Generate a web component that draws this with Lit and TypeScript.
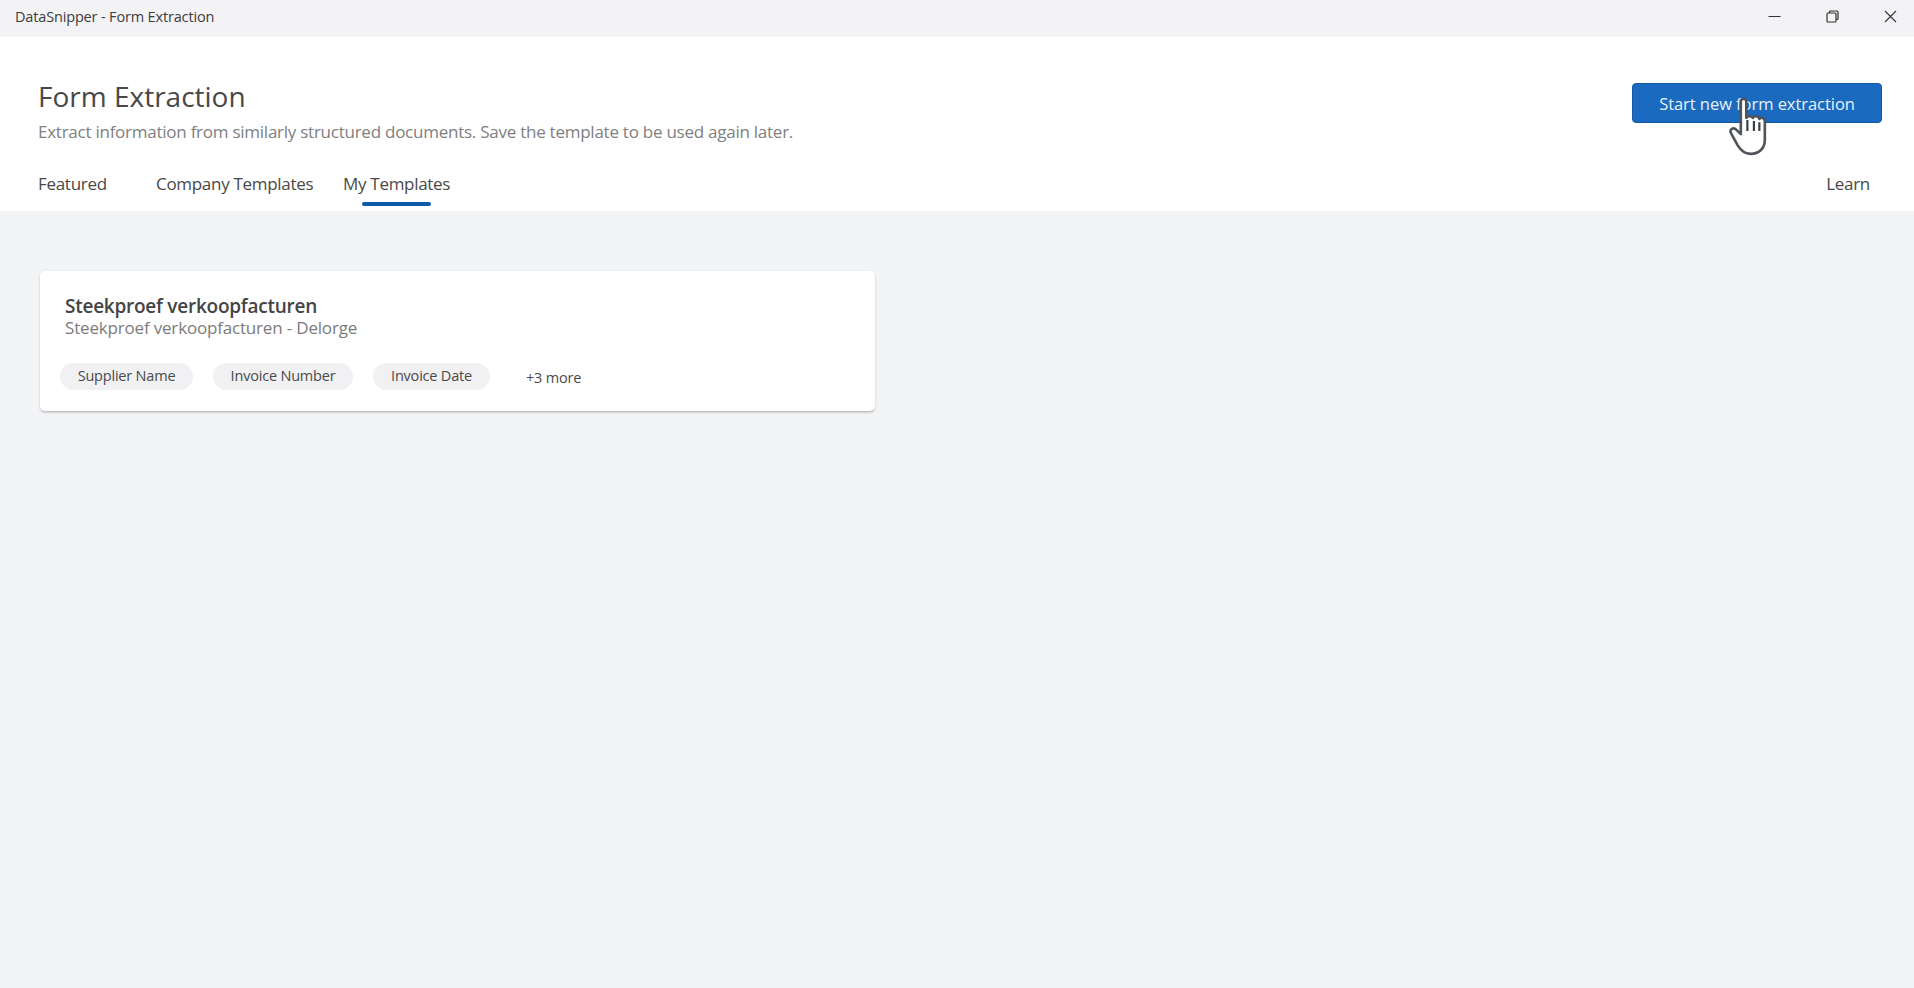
import { LitElement, html, css } from "lit";
import { customElement } from "lit/decorators.js";

@customElement("app-root")
export class AppRoot extends LitElement {
  static styles = css`
    :host { display: flex; flex-direction: column; width: 100%; height: 988px; background: #f3f4f6; font-family: "Open Sans", "Noto Sans", sans-serif; color: #444; overflow: hidden; }
    .titlebar { height: 37px; flex: none; box-sizing: border-box; padding: 0 0 4px 15px; display: flex; align-items: center; background: #f3f3f5; font-size: 14.5px; letter-spacing: -0.16px; color: #3c3c3c; position: relative; }
    .winbtns { margin-left: auto; display: flex; align-items: center; gap: 45px; padding-right: 17px; }
    .winbtns svg { display: block; width: 13px; height: 13px; }
    .header { height: 174px; flex: none; background: #fff; display: flex; flex-direction: column; padding: 0 32px 0 38px; box-sizing: border-box; position: relative; }
    .top { display: flex; justify-content: space-between; align-items: flex-start; padding-top: 41px; }
    h1 { margin: 0; font-size: 28px; font-weight: 400; line-height: 36px; color: #484848; }
    .sub { margin-top: 6px; font-size: 17px; line-height: 24px; color: #808080; letter-spacing: -0.25px; }
    .btn { width: 250px; height: 40px; margin-top: 5px; box-sizing: border-box; display: flex; align-items: center; justify-content: center; background: #1a6ac0; border: 1px solid #1458a4; border-radius: 4px; color: #e8f1fa; font-family: inherit; font-size: 16.5px; letter-spacing: -0.05px; padding: 0; }
    .tabs { display: flex; align-items: flex-start; margin-top: 28px; font-size: 17px; line-height: 24px; letter-spacing: -0.3px; color: #484848; }
    .tab { position: relative; }
    .tab.w1 { width: 118px; } .tab.w2 { width: 187px; }
    .tab.active::after { content: ""; position: absolute; left: 19px; right: 19px; top: 30px; height: 4px; border-radius: 2px; background: #0f5ba8; }
    .learn { margin-left: auto; margin-right: 12px; }
    .content { padding: 60px 0 0 40px; }
    .card { width: 835px; height: 140px; box-sizing: border-box; background: #fff; border-radius: 5px; box-shadow: 0 2px 3px -1px rgba(0,0,0,.3), 0 0 3px rgba(0,0,0,.06); padding: 23px 20px 0 25px; }
    .name { font-size: 19px; font-weight: 600; line-height: 24px; letter-spacing: -0.25px; color: #444; }
    .desc { margin-top: -1px; font-size: 17px; line-height: 22px; letter-spacing: -0.18px; color: #7c7c7c; }
    .chips { display: flex; align-items: center; margin: 24px 0 0 -5px; font-size: 14.5px; letter-spacing: -0.2px; color: #4a4a4a; }
    .chip { height: 27px; box-sizing: border-box; padding-bottom: 2px; display: flex; align-items: center; justify-content: center; border-radius: 14px; background: #f1f0f2; margin-right: 20px; }
    .more { margin-left: 16px; padding-top: 1px; }
    .hand { position: absolute; left: 1726px; top: 96px; width: 46px; height: 60px; pointer-events: none; }
  `;

  private chips = [["Supplier Name", 133], ["Invoice Number", 140], ["Invoice Date", 117]] as [string, number][];

  render() {
    return html`
      <div class="titlebar">
        <span>DataSnipper - Form Extraction</span>
        <div class="winbtns">
          <svg viewBox="0 0 13 13"><path d="M0.5 6.5h12" stroke="#333" stroke-width="1" fill="none"/></svg>
          <svg viewBox="0 0 13 13" fill="none" stroke="#333" stroke-width="1.2"><rect x="1" y="3" width="9" height="9" rx="1"/><path d="M3.5 3V2a1 1 0 0 1 1-1H11a1 1 0 0 1 1 1v6.500a1 1 0 0 1-1 1h-1"/></svg>
          <svg viewBox="0 0 13 13"><path d="M1 1l11 11M12 1L1 12" stroke="#333" stroke-width="1.100" fill="none"/></svg>
        </div>
      </div>
      <div class="header">
        <div class="top">
          <div>
            <h1>Form Extraction</h1>
            <div class="sub">Extract information from similarly structured documents. Save the template to be used again later.</div>
          </div>
          <button class="btn">Start new form extraction</button>
        </div>
        <div class="tabs">
          <div class="tab w1">Featured</div>
          <div class="tab w2">Company Templates</div>
          <div class="tab active">My Templates</div>
          <div class="tab learn">Learn</div>
        </div>
      </div>
      <div class="content">
        <div class="card">
          <div class="name">Steekproef verkoopfacturen</div>
          <div class="desc">Steekproef verkoopfacturen - Delorge</div>
          <div class="chips">
            ${this.chips.map(([t, w]) => html`<div class="chip" style="width:${w}px">${t}</div>`)}
            <div class="more">+3 more</div>
          </div>
        </div>
      </div>
      <svg class="hand" viewBox="1 1 37 55">
        <path d="M12 6c0-3 5-3 5 0v15c1-2 5-2 6 0 1-2 5-2 6 1 1-2 5-1 5 2v17c0 8-5 13-13 13-6 0-9-3-12-8L3 35c-2-3 2-6 5-3l4 4z" fill="#fff" stroke="#50545a" stroke-width="2.400" stroke-linejoin="round"/>
        <path d="M18 23v10M24 24v9M29 25v8" stroke="#3c4046" stroke-width="2" fill="none"/>
      </svg>
    `;
  }
}
